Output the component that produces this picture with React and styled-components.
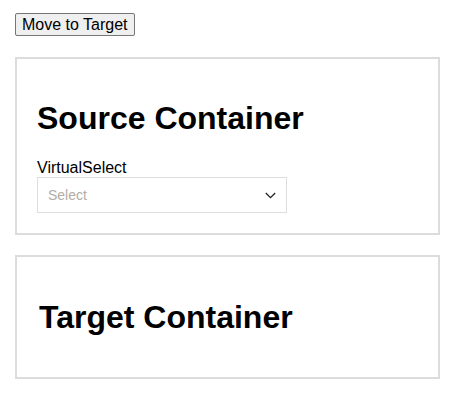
import React, { useState } from 'react'
import styled, { createGlobalStyle } from 'styled-components'

const GlobalStyle = createGlobalStyle`
  body {
    margin: 0;
    background: #fff;
    font-family: "Liberation Sans", Arial, sans-serif;
    color: #000;
  }
`

const Page = styled.div`
  padding: 13px 10px 0 15px;
`

const MoveButton = styled.button`
  font-family: "Liberation Sans", Arial, sans-serif;
  font-size: 16px;
  line-height: 19px;
  padding: 1px 6px;
  color: #000;
  background: #efefef;
  border: 1px solid #767676;
  border-radius: 2px;
  margin-bottom: 21px;
  display: block;
`

const Container = styled.section`
  border: 2px solid #dcdcdc;
  padding: 20px;
  & + & {
    margin-top: 20px;
  }
`

const Title = styled.h1`
  font-size: 32px;
  font-weight: bold;
  margin: 21.44px 0;
  padding-left: ${p => p.$indent || 0}px;
`

const FieldLabel = styled.div`
  font-size: 16px;
  line-height: 18.4px;
`

const SelectBox = styled.div`
  width: 250px;
  height: 36px;
  box-sizing: border-box;
  border: 1px solid #ddd;
  display: flex;
  align-items: center;
  justify-content: space-between;
  padding: 0 10px 0 10px;
  cursor: pointer;
`

const Placeholder = styled.span`
  font-size: 14px;
  color: #b3aca5;
`

const Chevron = () => (
  <svg width="11" height="7" viewBox="0 0 11 7" fill="none">
    <path d="M0.8 1 L5.5 5.7 L10.2 1" stroke="#222" strokeWidth="1.3" />
  </svg>
)

export default function App() {
  const [inTarget, setInTarget] = useState(false)

  const select = (
    <div>
      <FieldLabel>VirtualSelect</FieldLabel>
      <SelectBox>
        <Placeholder>Select</Placeholder>
        <Chevron />
      </SelectBox>
    </div>
  )

  return (
    <Page>
      <GlobalStyle />
      <MoveButton onClick={() => setInTarget(!inTarget)}>Move to Target</MoveButton>
      <Container>
        <Title>Source Container</Title>
        {!inTarget && select}
      </Container>
      <Container>
        <Title $indent={2}>Target Container</Title>
        {inTarget && select}
      </Container>
    </Page>
  )
}
